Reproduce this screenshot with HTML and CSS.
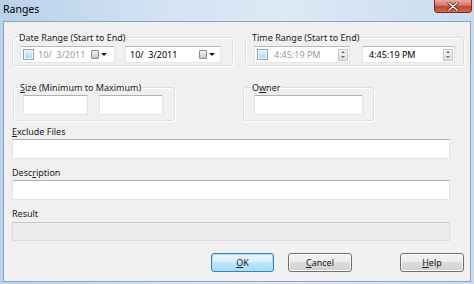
FILE: index.html
```html
<!DOCTYPE html>
<html lang="en">
  <head>
    <meta charset="UTF-8" />
    <title>Ranges</title>
    <link rel="stylesheet" href="styles.css">
  </head>
  <body>
    <div class="window">
      <div class="titlebar">
        <span class="title">Ranges</span>
        <span class="close">
          <svg width="12" height="9" viewBox="0 0 12 9">
            <path d="M2 1 L10 8 M10 1 L2 8" stroke="#5a1a12" stroke-width="3" stroke-linecap="round" />
            <path d="M2 1 L10 8 M10 1 L2 8" stroke="#ffffff" stroke-width="1.6" stroke-linecap="round" />
          </svg>
        </span>
      </div>

      <div class="client">
        <div class="group-row top-row">
          <fieldset class="group date-group">
            <legend>Date Range (Start to End)</legend>
            <div class="group-body">
              <div class="picker date-start">
                <span class="check"></span>
                <span class="value disabled">10/&nbsp;&nbsp;3/2011</span>
                <span class="cal"></span>
                <span class="arrow"></span>
              </div>
              <div class="picker date-end">
                <span class="value">10/&nbsp;&nbsp;3/2011</span>
                <span class="cal"></span>
                <span class="arrow"></span>
              </div>
            </div>
          </fieldset>

          <fieldset class="group time-group">
            <legend>Time Range (Start to End)</legend>
            <div class="group-body">
              <div class="picker time-start">
                <span class="check"></span>
                <span class="value disabled">4:45:19 PM</span>
                <span class="spin"><i class="up"></i><i class="down"></i></span>
              </div>
              <div class="picker time-end">
                <span class="value">4:45:19 PM</span>
                <span class="spin"><i class="up"></i><i class="down"></i></span>
              </div>
            </div>
          </fieldset>
        </div>

        <div class="group-row mid-row">
          <fieldset class="group size-group">
            <legend><u>S</u>ize (Minimum to Maximum)</legend>
            <div class="group-body">
              <div class="field size-min"></div>
              <div class="field size-max"></div>
            </div>
          </fieldset>

          <fieldset class="group owner-group">
            <legend>O<u>w</u>ner</legend>
            <div class="group-body">
              <div class="field owner"></div>
            </div>
          </fieldset>
        </div>

        <div class="label exclude-label"><u>E</u>xclude Files</div>
        <div class="field wide"></div>

        <div class="label desc-label">Desc<u>r</u>iption</div>
        <div class="field wide"></div>

        <div class="label result-label">Result</div>
        <div class="field wide result"></div>

        <div class="buttons">
          <button class="btn btn-default"><u>O</u>K</button>
          <button class="btn btn-cancel"><u>C</u>ancel</button>
          <button class="btn btn-help"><u>H</u>elp</button>
        </div>
      </div>
    </div>
  </body>
</html>
```

FILE: styles.css
```css
/* General Styling */
body {
  margin: 0;
  padding: 0;
  font-family: "Noto Sans", "Open Sans", sans-serif;
  font-size: 9px;
  color: #1a1a1a;
  background-color: #ffffff;
}

u {
  text-decoration: underline;
  text-underline-offset: 1px;
}

/* Window frame */
.window {
  width: 474px;
  height: 284px;
  box-sizing: border-box;
  padding: 0 3px 2px 3px;
  background: linear-gradient(to right, #b9d1ea 0%, #d3e3f3 35%, #dce9f6 60%, #c9dcef 100%);
  display: flex;
  flex-direction: column;
}

.titlebar {
  height: 21px;
  display: flex;
  justify-content: space-between;
  align-items: flex-start;
  flex-shrink: 0;
}

.title {
  margin-top: 2px;
  margin-left: 0;
  font-size: 10.5px;
  line-height: 14px;
  color: #000;
}

.close {
  width: 38px;
  height: 13px;
  margin-right: -1px;
  box-sizing: border-box;
  border: 1px solid #7a2a1f;
  border-top: none;
  border-radius: 0 0 4px 4px;
  background: linear-gradient(to bottom, #e9a99b 0%, #d57563 45%, #c2432e 55%, #d26a4f 100%);
  display: flex;
  align-items: center;
  justify-content: center;
}

.client {
  flex: 1;
  border: 1px solid #8ea4bb;
  background-color: #f0f0f0;
  padding: 9px 0 0 0;
}

/* Group boxes */
.group-row {
  display: flex;
}

.group {
  margin: 0;
  padding: 0;
  border: 1px solid #d9dfe3;
  border-radius: 3px;
  box-shadow: inset 1px 1px 0 #ffffff, 1px 1px 0 #ffffff;
  box-sizing: border-box;
}

.group legend {
  padding: 0 2px;
  margin-left: 4px;
  line-height: 13px;
  height: 13px;
}

.group-body {
  display: flex;
}

.top-row .group-body {
  margin-top: 2px;
  padding-bottom: 2px;
}

.date-group {
  margin-left: 8px;
  width: 221px;
}

.date-group .group-body {
  padding-left: 7px;
  gap: 10px;
}

.time-group {
  margin-left: 12px;
  width: 219px;
}

.time-group .group-body {
  padding-left: 8px;
  gap: 12px;
}

.mid-row {
  margin-top: 15px;
}

.mid-row .group-body {
  margin-top: 1px;
  padding-bottom: 5px;
}

.size-group {
  margin-left: 9px;
  width: 162px;
}

.size-group .group-body {
  padding-left: 9px;
  gap: 11px;
}

.owner-group {
  margin-left: 68px;
  width: 131px;
}

.owner-group legend {
  margin-left: 6px;
}

.owner-group .group-body {
  padding-left: 10px;
}

/* Pickers */
.picker {
  height: 17px;
  box-sizing: border-box;
  background-color: #ffffff;
  border: 1px solid #e3e6ea;
  border-top-color: #b6bac0;
  display: flex;
  align-items: center;
  padding-left: 2px;
  color: #000;
}

.date-start {
  width: 95px;
}

.date-end {
  width: 96px;
  padding-left: 4px;
}

.time-start {
  width: 96px;
}

.time-end {
  width: 93px;
  padding-left: 6px;
}

.check {
  width: 11px;
  height: 11px;
  box-sizing: border-box;
  border: 1px solid #8ba5bd;
  background: linear-gradient(to bottom, #e4f3fc, #a9d6f2);
  box-shadow: inset 0 0 0 1px #f2f9fe;
  margin-right: 4px;
  flex-shrink: 0;
}

.value {
  white-space: nowrap;
  line-height: 13px;
}

.value.disabled {
  color: #9c9c9c;
}

.date-start .value {
  width: 53px;
}

.date-end .value {
  width: 69px;
}

.time-start .value {
  width: 64px;
  margin-left: 2px;
}

.time-end .value {
  width: 74px;
}

.cal {
  width: 8px;
  height: 9px;
  box-sizing: border-box;
  border: 1px solid #8c8c8c;
  border-radius: 1px;
  background: linear-gradient(to bottom, #f4f4f4, #c6c6c6);
  margin-right: 2px;
}

.arrow {
  width: 0;
  height: 0;
  border-left: 3px solid transparent;
  border-right: 3px solid transparent;
  border-top: 3px solid #1a1a1a;
}

.spin {
  width: 10px;
  height: 12px;
  box-sizing: border-box;
  border: 1px solid #c3c7cc;
  border-radius: 1px;
  background: linear-gradient(to bottom, #f6f6f6, #dedede);
  display: flex;
  flex-direction: column;
  align-items: center;
  justify-content: space-around;
}

.spin .up {
  width: 0;
  height: 0;
  border-left: 2px solid transparent;
  border-right: 2px solid transparent;
  border-bottom: 2px solid #6a6a6a;
}

.spin .down {
  width: 0;
  height: 0;
  border-left: 2px solid transparent;
  border-right: 2px solid transparent;
  border-top: 2px solid #6a6a6a;
}

/* Text fields */
.field {
  height: 20px;
  box-sizing: border-box;
  background-color: #ffffff;
  border: 1px solid #e2e4e8;
  border-top-color: #aeb2b8;
}

.size-min {
  width: 65px;
}

.size-max {
  width: 64px;
}

.owner {
  width: 109px;
}

.label {
  margin-left: 8px;
  line-height: 13px;
}

.exclude-label {
  margin-top: 4px;
  margin-bottom: 1px;
}

.desc-label {
  margin-top: 7px;
  margin-bottom: 1px;
}

.result-label {
  margin-top: 7px;
  margin-bottom: 2px;
}

.wide {
  margin-left: 8px;
  width: 438px;
}

.result {
  height: 19px;
  background-color: #ececec;
  border-color: #dcdcdc;
  border-top-color: #c9c9c9;
}

/* Buttons */
.buttons {
  display: flex;
  margin-top: 12px;
  padding-left: 207px;
}

.btn {
  height: 19px;
  box-sizing: border-box;
  padding: 0;
  font-family: inherit;
  font-size: 9px;
  color: #1a1a1a;
  border: 1px solid #707070;
  border-radius: 3px;
  background: linear-gradient(to bottom, #f3f3f3 0%, #ebebeb 50%, #dddddd 50%, #cfcfcf 100%);
  box-shadow: inset 0 0 0 1px #fbfbfb;
  width: 64px;
}

.btn-default {
  width: 63px;
  border-color: #3c7fb1;
  background: linear-gradient(to bottom, #eaf6fd 0%, #d9f0fc 50%, #bee6fd 50%, #a7d9f5 100%);
  box-shadow: inset 0 0 0 1px #a5def9;
}

.btn-cancel {
  margin-left: 14px;
}

.btn-help {
  margin-left: 48px;
}
```
